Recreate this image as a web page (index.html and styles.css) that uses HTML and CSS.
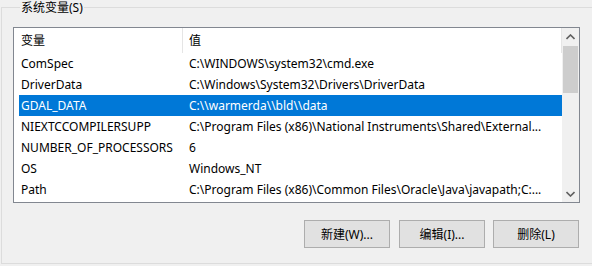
FILE: index.html
```html
<html>
  <head>
    <link rel="stylesheet" href="styles.css">
    <title>系统变量</title>
  </head>
  <body>
    <div class="group">
      <span class="group-title">系统变量(S)</span>

      <div class="listbox">
        <div class="list">
          <div class="list-head">
            <div class="head-cell name-head">变量</div>
            <div class="head-cell value-head">值</div>
          </div>
          <div class="row">
            <span class="cell">ComSpec</span>
            <span class="cell">C:\WINDOWS\system32\cmd.exe</span>
          </div>
          <div class="row">
            <span class="cell">DriverData</span>
            <span class="cell">C:\Windows\System32\Drivers\DriverData</span>
          </div>
          <div class="row selected">
            <span class="cell">GDAL_DATA</span>
            <span class="cell">C:\\warmerda\\bld\\data</span>
          </div>
          <div class="row">
            <span class="cell">NIEXTCCOMPILERSUPP</span>
            <span class="cell">C:\Program Files (x86)\National Instruments\Shared\External...</span>
          </div>
          <div class="row">
            <span class="cell">NUMBER_OF_PROCESSORS</span>
            <span class="cell">6</span>
          </div>
          <div class="row">
            <span class="cell">OS</span>
            <span class="cell">Windows_NT</span>
          </div>
          <div class="row">
            <span class="cell">Path</span>
            <span class="cell">C:\Program Files (x86)\Common Files\Oracle\Java\javapath;C:...</span>
          </div>
        </div>

        <div class="scrollbar">
          <div class="arrow">
            <svg width="9" height="6" viewBox="0 0 9 6"><path d="M0.5 5 L4.5 1 L8.5 5" fill="none" stroke="#606060" stroke-width="1.6"/></svg>
          </div>
          <div class="thumb"></div>
          <div class="track"></div>
          <div class="arrow">
            <svg width="9" height="6" viewBox="0 0 9 6"><path d="M0.5 1 L4.5 5 L8.5 1" fill="none" stroke="#606060" stroke-width="1.6"/></svg>
          </div>
        </div>
      </div>

      <div class="buttons">
        <button class="btn">新建(W)...</button>
        <button class="btn">编辑(I)...</button>
        <button class="btn">删除(L)</button>
      </div>
    </div>
  </body>
</html>
```

FILE: styles.css
```css
body {
  margin: 0;
  background: #f0f0f0;
  font-family: "Segoe UI", "Noto Sans", "Noto Sans CJK SC", sans-serif;
  font-size: 12px;
  color: #000;
  overflow: hidden;
}

/* the group box runs off the right edge, so no right border */
.group {
  margin: 7px 0 0 1px;
  border: 1px solid #dcdcdc;
  border-right: none;
  padding: 0 0 15px 11px;
}

.group-title {
  display: inline-block;
  margin: -8px 0 0 7px;
  padding: 0 1px;
  line-height: 16px;
  height: 16px;
  background: #f0f0f0;
  vertical-align: top;
}

.listbox {
  margin-top: 11px;
  width: 565px;
  height: 174px;
  border: 1px solid #828790;
  background: #fff;
  display: flex;
}

.list {
  width: 548px;
  overflow: hidden;
}

.list-head {
  height: 25px;
  display: flex;
}

.head-cell {
  line-height: 25px;
  height: 25px;
  border-right: 1px solid #e5e5e5;
  white-space: nowrap;
}

.name-head {
  width: 161px;
  padding-left: 7px;
}

.value-head {
  flex: 1;
  padding-left: 6px;
}

.row {
  margin-left: 5px;
  height: 21px;
  line-height: 21px;
  display: grid;
  grid-template-columns: 168px 1fr;
  white-space: nowrap;
}

.cell {
  padding-left: 2px;
  overflow: hidden;
}

.row.selected {
  background: #0078d7;
  color: #fff;
}

.scrollbar {
  width: 17px;
  background: #f0f0f0;
  display: flex;
  flex-direction: column;
}

.arrow {
  height: 17px;
  display: flex;
  align-items: center;
  justify-content: center;
}

.thumb {
  margin: 1px 1px 0 1px;
  height: 47px;
  background: #cdcdcd;
}

.track {
  flex: 1;
}

.buttons {
  width: 566px;
  margin-top: 17px;
  display: flex;
  justify-content: flex-end;
}

.btn {
  width: 86px;
  height: 28px;
  margin: 0;
  padding: 0;
  border: 1px solid #adadad;
  background: #e1e1e1;
  font-family: inherit;
  font-size: 12px;
  color: #000;
}

.btn:first-child {
  margin-right: 9px;
}

.btn:nth-child(2) {
  margin-right: 8px;
}
```
